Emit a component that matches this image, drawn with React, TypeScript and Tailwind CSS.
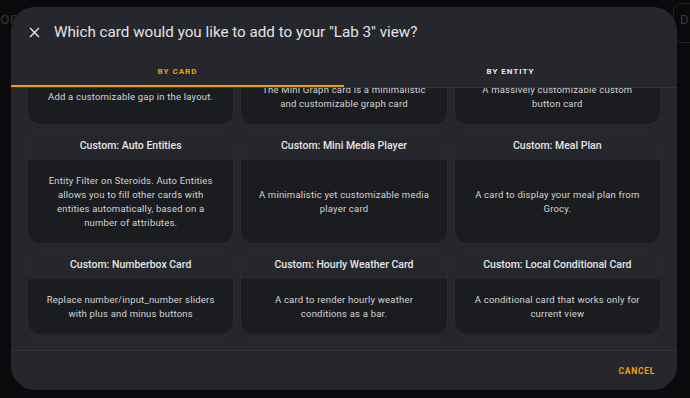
import React from "react";

type Card = { title?: string; desc: string };

const rows: Card[][] = [
  [
    { desc: "Add a customizable gap in the layout." },
    { desc: "The Mini Graph card is a minimalistic and customizable graph card" },
    { desc: "A massively customizable custom button card" },
  ],
  [
    {
      title: "Custom: Auto Entities",
      desc: "Entity Filter on Steroids. Auto Entities allows you to fill other cards with entities automatically, based on a number of attributes.",
    },
    { title: "Custom: Mini Media Player", desc: "A minimalistic yet customizable media player card" },
    { title: "Custom: Meal Plan", desc: "A card to display your meal plan from Grocy." },
  ],
  [
    { title: "Custom: Numberbox Card", desc: "Replace number/input_number sliders with plus and minus buttons" },
    { title: "Custom: Hourly Weather Card", desc: "A card to render hourly weather conditions as a bar." },
    { title: "Custom: Local Conditional Card", desc: "A conditional card that works only for current view" },
  ],
  [
    { title: "Custom: Illuminance Card", desc: "" },
    { title: "Custom: Horizon Card", desc: "" },
    { title: "Custom: Scheduler Card", desc: "" },
  ],
];

function PickerCard({ card }: { card: Card }) {
  return (
    <div className="flex flex-col rounded-xl border border-[#2a2b30]">
      <div className="flex h-[28px] items-center justify-center text-[10.5px] font-medium text-[#e6e6e6]">
        {card.title ?? "Custom: Card"}
      </div>
      <div className="flex flex-1 items-center justify-center rounded-b-xl bg-[#1b1c20] px-4 py-[13.5px] text-center text-[9.5px] leading-[14px] tracking-[0.2px] text-[#d4d4d4]">
        {card.desc}
      </div>
    </div>
  );
}

export default function App() {
  return (
    <div
      className="relative h-[398px] w-[690px] overflow-hidden bg-[#0a0a0c]"
      style={{ fontFamily: "Roboto, 'Liberation Sans', sans-serif" }}
    >
      <div className="absolute left-0 top-[6px] text-[17px] text-[#2e2e31]">on</div>
      <div className="absolute left-[673px] top-[3px] h-[40px] w-[40px] rounded-lg border border-[#232326] pl-[6px] pt-[6px] text-[13px] text-[#3a3a3e]">
        D
      </div>

      <div className="absolute left-[11px] top-[7px] flex h-[383px] w-[666px] flex-col overflow-hidden rounded-[24px] bg-[#26272c]">
        <div className="flex h-[50px] shrink-0 items-center pl-[15px] pt-[1px]">
          <svg width="17" height="17" viewBox="0 0 24 24" className="text-[#e6e6e6]">
            <path
              fill="currentColor"
              d="M19 6.41 17.59 5 12 10.59 6.41 5 5 6.41 10.59 12 5 17.59 6.41 19 12 13.41 17.59 19 19 17.59 13.41 12z"
            />
          </svg>
          <div className="ml-[11px] text-[15.2px] text-[#e3e3e3]">
            Which card would you like to add to your "Lab 3" view?
          </div>
        </div>

        <div className="flex h-[31px] shrink-0 border-b border-[#34353b]">
          <div className="flex flex-1 flex-col">
            <div className="flex flex-1 items-center justify-center pt-[2px] text-[8px] font-bold tracking-[1px] text-[#f29f05]">
              BY CARD
            </div>
            <div className="h-[2px] bg-[#f29f05]" />
          </div>
          <div className="flex flex-1 items-center justify-center text-[8px] font-bold tracking-[1px] text-[#e6e6e6]">
            BY ENTITY
          </div>
        </div>

        <div className="flex-1 overflow-hidden">
          <div className="-mt-[48px] flex flex-col gap-[6px] px-4">
            {rows.map((row, i) => (
              <div key={i} className="grid grid-cols-3 gap-[6px]">
                {row.map((c, j) => (
                  <PickerCard key={j} card={c} />
                ))}
              </div>
            ))}
          </div>
        </div>

        <div className="flex h-[40px] shrink-0 items-center justify-end border-t border-[#34353b] pr-[22px] pt-[2px]">
          <span className="text-[8.5px] font-bold tracking-[0.7px] text-[#f29f05]">CANCEL</span>
        </div>
      </div>
    </div>
  );
}
